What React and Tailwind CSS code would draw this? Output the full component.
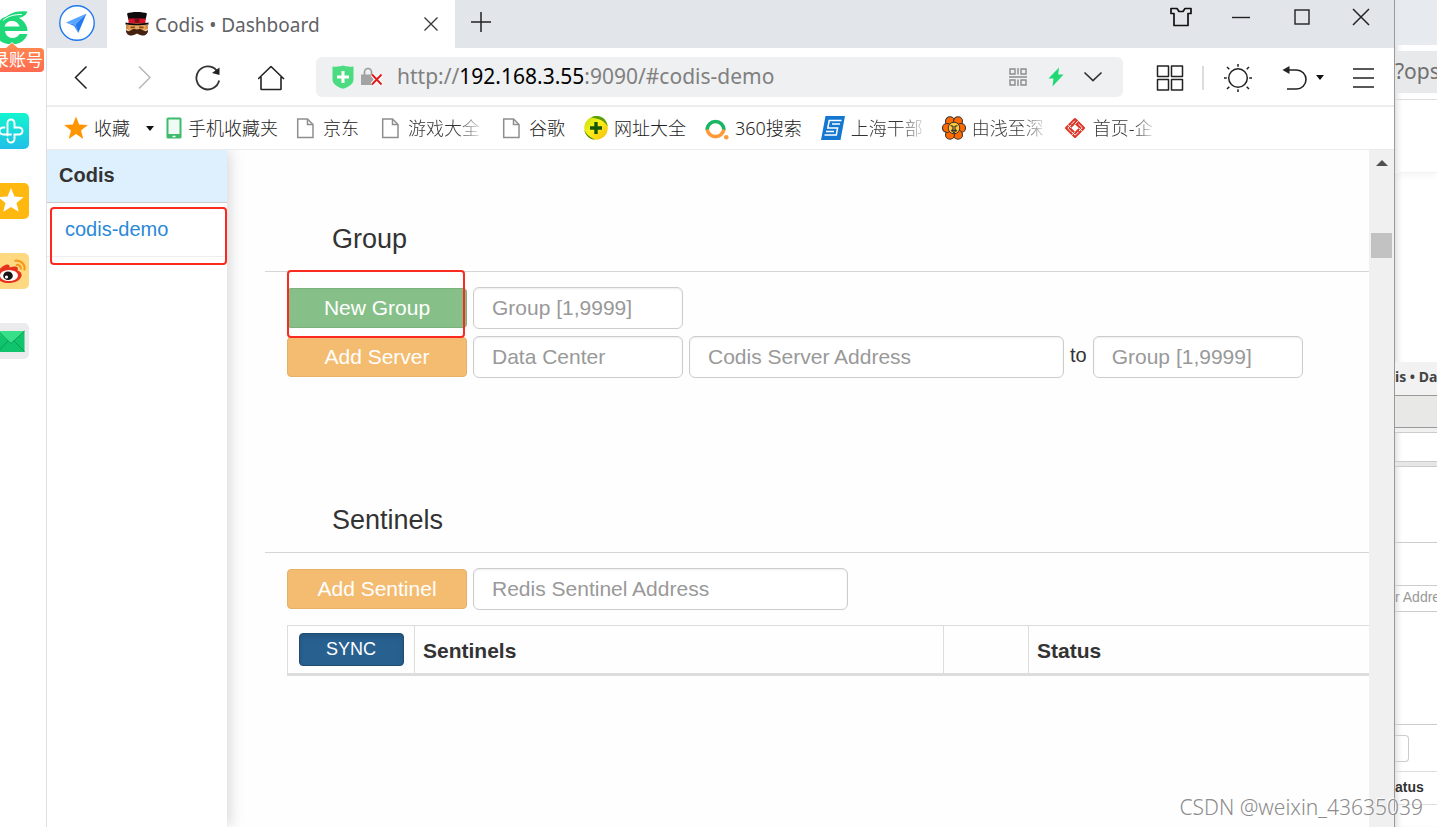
import React from 'react';

const UI = "font-['Noto_Sans','Noto_Sans_CJK_SC',sans-serif]";
const ARIAL = "font-['Liberation_Sans',Arial,sans-serif]";

/* ---------- bookmark icons ---------- */

function StarIcon() {
  return (
    <svg viewBox="0 0 24 24" className="h-6 w-6">
      <path d="M12 0.500l3.100 8.100 8.700.4-6.800 5.400 2.300 8.500-7.300-4.800-7.300 4.800L7 14.400.2 9l8.700-.4z" fill="#ff9500" />
    </svg>
  );
}

function PhoneIcon() {
  return (
    <svg viewBox="0 0 16 22" className="h-[22px] w-4">
      <rect x="0.500" y="0.500" width="15" height="21" rx="1.500" fill="#3dba6b" />
      <rect x="2.500" y="2.500" width="11" height="14.500" fill="#f1fbf5" />
      <path d="M6.500 19.500h3" stroke="#fff" strokeWidth="1.500" />
    </svg>
  );
}

function FileIcon() {
  return (
    <svg viewBox="0 0 24 24" className="h-6 w-6" fill="none" stroke="#8e8e8e" strokeWidth="1.500">
      <path d="M4.700 3h9.800l5.500 5.500v13h-15.300z" />
      <path d="M14.500 3v5.500h5.500" />
    </svg>
  );
}

function Ball360Icon() {
  return (
    <svg viewBox="0 0 24 24" className="h-6 w-6">
      <defs>
        <linearGradient id="ball" x1="0" y1="0" x2="1" y2="1">
          <stop offset="0" stopColor="#b5e010" />
          <stop offset="0.450" stopColor="#fff01a" />
          <stop offset="1" stopColor="#f2b90a" />
        </linearGradient>
      </defs>
      <circle cx="12" cy="12" r="11.800" fill="url(#ball)" />
      <path d="M7 1.500C12-1.500 19-.5 22.500 6c.7 1.500 1 3 1.200 4.500C21 5.500 16 2.500 7 1.500z" fill="#5a9e0c" />
      <path d="M.3 14c1 5 5.200 9.700 11.200 9.800C8 22.500 3 19.500.3 14z" fill="#3f8a12" />
      <path d="M10.300 6h3.400v4.300H18v3.400h-4.300V18h-3.400v-4.300H6v-3.400h4.300z" fill="#17560a" />
    </svg>
  );
}

function SearchRingIcon() {
  return (
    <svg viewBox="0 0 24 24" className="h-6 w-6" fill="none" strokeWidth="3.600">
      <path d="M2 14a8.500 8.500 0 1 1 17 0" stroke="#19b565" />
      <path d="M2.200 13.500a8.400 8.400 0 0 0 16.600 0" stroke="#ff9a38" />
      <circle cx="21.300" cy="21.300" r="2.300" fill="#ff9a38" />
    </svg>
  );
}

function ShanghaiIcon() {
  return (
    <svg viewBox="0 0 24 24" className="h-6 w-6">
      <path d="M4.500 0H24l-4.500 24H0z" fill="#1578d0" />
      <path d="M20.500 4.500H8.200L6.800 12h9.800l-1.300 7H3.500" fill="none" stroke="#fff" strokeWidth="1.500" />
      <path d="M19 8h-8M13 15.500H5" stroke="#fff" strokeWidth="1.300" />
    </svg>
  );
}

function LionIcon() {
  return (
    <svg viewBox="0 0 24 24" className="h-6 w-6">
      <g fill="#ff6a00" stroke="#3b3430" strokeWidth="1.100">
        <circle cx="8" cy="5.200" r="4.500" />
        <circle cx="16" cy="5.200" r="4.500" />
        <circle cx="19" cy="12" r="4.500" />
        <circle cx="16" cy="18.800" r="4.500" />
        <circle cx="8" cy="18.800" r="4.500" />
        <circle cx="5" cy="12" r="4.500" />
      </g>
      <circle cx="12" cy="12" r="5.800" fill="#ffc93a" stroke="#3b3430" />
      <path d="M8.500 9.500l2.500 1v3l-2 1.500M15.500 9.500l-2.500 1v3l2 1.500M10.300 14.500h3.400L12 17z" fill="none" stroke="#3b3430" strokeWidth="1.200" />
    </svg>
  );
}

function RedDiamondIcon() {
  return (
    <svg viewBox="-12 -12 24 24" className="h-6 w-6">
      <g transform="rotate(45)">
        <rect x="-7.500" y="-7.500" width="15" height="15" rx="1.500" fill="#dc3528" />
        <rect x="-2.700" y="-2.700" width="5.400" height="5.400" fill="#fff" />
        <path
          d="M-2.700-2.700V-8M2.700-2.700H8M2.700 2.700V8M-2.700 2.700H-8M-.3-5.200H5V-.5M5.200.3V5H.5M.3 5.200H-5V.5M-5.200-.3V-5"
          fill="none"
          stroke="#fff"
          strokeWidth="0.900"
        />
      </g>
    </svg>
  );
}

const bookmarks = [
  { text: '京东', Icon: FileIcon },
  { text: '游戏大全', Icon: FileIcon, fade: true },
  { text: '谷歌', Icon: FileIcon },
  { text: '网址大全', Icon: Ball360Icon },
  { text: '360搜索', Icon: SearchRingIcon },
  { text: '上海干部', Icon: ShanghaiIcon, fade: true },
  { text: '由浅至深', Icon: LionIcon, fade: true },
  { text: '首页-企', Icon: RedDiamondIcon, fade: true },
];

function Bookmark({ text, Icon, fade }) {
  return (
    <a href="#" className="flex items-center gap-1.5 whitespace-nowrap">
      <Icon />
      <span
        className={
          fade
            ? 'bg-linear-to-r from-[#333] from-70% to-[#333]/20 bg-clip-text text-transparent'
            : ''
        }
      >
        {text}
      </span>
    </a>
  );
}

/* ---------- browser chrome ---------- */

function TitleBar() {
  return (
    <header className="flex h-12 items-stretch bg-[#e2e5ea]">
      <button aria-label="Home page" className="flex w-[60px] items-center justify-center pb-0.5">
        <svg viewBox="0 0 36 36" className="h-9 w-9">
          <circle cx="18" cy="18" r="17.200" fill="#fff" stroke="#1f7af0" strokeWidth="1.400" />
          <path d="M27.500 8.500L7 17.500l9.300 2z" fill="#5aa5ff" />
          <path d="M27.500 8.500L16.300 19.500l3 8.500z" fill="#2379ee" />
          <path d="M16.300 19.500L7 17.500l8 3.500 4.300 7z" fill="#3a8cf5" />
        </svg>
      </button>
      <div className="flex w-[348px] items-center gap-1.5 bg-white pl-[18px] pr-3.5">
        <svg viewBox="0 0 24 26" className="h-[26px] w-6 shrink-0">
          <path d="M3 12h18v7l-3 4H6l-3-4z" fill="#e6a55c" />
          <path d="M1 14h2.500v4.500H1zM20.500 14H23v4.500h-2.500z" fill="#d18c4b" />
          <path d="M2 2.500C6 .5 18 .5 22 2.500L20.500 9h-17z" fill="#0d0b0b" />
          <path d="M3.500 7.500h17v5h-17z" fill="#d3142b" />
          <circle cx="12" cy="9.500" r="2.500" fill="#7c0b18" />
          <path d="M.5 11.500c7 1.500 16 1.500 23 0v2c-7 1-16 1-23 0z" fill="#0d0b0b" />
          <path d="M5.500 15.500H10v1.800H5.500zM14 15.500h4.500v1.800H14z" fill="#8a4a1c" />
          <path d="M12 18.500c2-1 5-.5 6.500 1 1.500 1.200 3 .5 4.500-.5.3 3-2 6-6 5.500-2.500-.3-4-1.200-5-2.200-1 1-2.500 1.900-5 2.200-4 .5-6.300-2.500-6-5.500 1.500 1 3 1.700 4.500.5 1.500-1.500 4.500-2 6.500-1z" fill="#43200f" />
        </svg>
        <span className="flex-1 pt-0.5 text-[19px] text-[#5f6266]">Codis • Dashboard</span>
        <button aria-label="Close tab">
          <svg viewBox="0 0 20 20" className="h-5 w-5" stroke="#3c3c3c" strokeWidth="1.400">
            <path d="M3.500 3.500l13 13M16.500 3.500l-13 13" />
          </svg>
        </button>
      </div>
      <button aria-label="New tab" className="flex w-[52px] items-center justify-center pb-1">
        <svg viewBox="0 0 20 20" className="h-5 w-5" stroke="#222" strokeWidth="1.500">
          <path d="M10 0v20M0 10h20" />
        </svg>
      </button>
      <div className="ml-auto flex items-center gap-[38px] pb-3.5 pr-[22px]">
        <button aria-label="Skin">
          <svg viewBox="0 0 22 22" className="h-[22px] w-[22px]" fill="none" stroke="#111" strokeWidth="1.700" strokeLinejoin="round">
            <path d="M1 2.500h6L9 5.500h4l2-3h6v5h-3V19.500H4V7.500H1z" />
          </svg>
        </button>
        <button aria-label="Minimize">
          <svg viewBox="0 0 22 22" className="h-[22px] w-[22px]" stroke="#222" strokeWidth="1.400">
            <path d="M2 11.500h18" />
          </svg>
        </button>
        <button aria-label="Maximize">
          <svg viewBox="0 0 22 22" className="h-[22px] w-[22px]" fill="none" stroke="#222" strokeWidth="1.400">
            <rect x="5" y="4" width="14" height="14" />
          </svg>
        </button>
        <button aria-label="Close">
          <svg viewBox="0 0 22 22" className="h-[22px] w-[22px]" stroke="#222" strokeWidth="1.500">
            <path d="M3 3l16 16M19 3L3 19" />
          </svg>
        </button>
      </div>
    </header>
  );
}

function Toolbar() {
  return (
    <div className="flex h-[59px] items-center border-b-2 border-[#ececec] bg-white pl-[22px] pr-4">
      <div className="flex items-center gap-[35px] pt-0.5">
        <button aria-label="Back">
          <svg viewBox="0 0 28 28" className="h-7 w-7" fill="none" stroke="#222" strokeWidth="1.500">
            <path d="M17.500 2.500L6.500 13.500l11 11" />
          </svg>
        </button>
        <button aria-label="Forward">
          <svg viewBox="0 0 28 28" className="h-7 w-7" fill="none" stroke="#b8b8b8" strokeWidth="1.500">
            <path d="M7 2.500l11 11-11 11" />
          </svg>
        </button>
        <button aria-label="Reload">
          <svg viewBox="0 0 28 28" className="h-7 w-7" fill="none" stroke="#333" strokeWidth="1.800">
            <path d="M24.100 16.500A11.500 11.500 0 1 1 21.500 6.300" />
            <path d="M24.500 3.500v7.500l-7.500-2z" fill="#222" stroke="none" />
          </svg>
        </button>
        <button aria-label="Home">
          <svg viewBox="0 0 28 28" className="h-7 w-7" fill="none" stroke="#222" strokeWidth="1.600" strokeLinejoin="round">
            <path d="M0 15L13 2.500 26 15M3 13v12q0 .5.500.5h19q.5 0 .5-.5V13" />
          </svg>
        </button>
      </div>

      <div className="ml-[30px] flex h-10 flex-1 items-center rounded-md bg-[#eff0f2] pl-4 pr-5">
        <svg viewBox="0 0 22 24" className="h-6 w-[22px]">
          <path d="M.5 1.500C5 2 8 1.500 11 .5c3 1 6 1.500 10.500 1v13c0 5-6 8-10.500 9.200C6.500 22.500.5 19.500.5 14.500z" fill="#4bdc82" />
          <path d="M9.500 6h3v4.500H17v3h-4.500V18h-3v-4.500H5v-3h4.500z" fill="#fff" />
        </svg>
        <svg viewBox="0 0 24 20" className="ml-1.5 h-5 w-6">
          <path d="M4.500 9V5a3.500 3.500 0 0 1 7 0V9" fill="none" stroke="#999" strokeWidth="1.600" />
          <path d="M1 7.500h12.500v10.500H1z" fill="#a3a3a3" />
          <path d="M12 7.500l9.500 10M21.500 7.500l-9.500 10" stroke="#fff" strokeWidth="4" />
          <path d="M12 7.500l9.500 10M21.500 7.500l-9.500 10" stroke="#e01b1b" strokeWidth="1.900" />
        </svg>
        <span className="ml-[13px] text-[21px] text-[#808080]">
          http://<span className="text-black">192.168.3.55</span>:9090/#codis-demo
        </span>
        <div className="ml-auto flex items-center gap-[19px]">
          <svg viewBox="0 0 18 18" className="h-[18px] w-[18px]" fill="none" stroke="#8c8c8c" strokeWidth="1.400">
            <path d="M1 1h5v5H1zM12 1h5v5h-5zM1 12h5v5H1zM12 12h5v5h-5zM0 9h18M9 0v6.500M9 11.500V18" />
          </svg>
          <svg viewBox="0 0 18 20" className="h-5 w-[18px]">
            <path d="M13 .5L2.500 11.500h5L6.500 19.500 17.500 7.500h-5.300z" fill="#1ed974" />
          </svg>
          <button aria-label="Show history">
            <svg viewBox="0 0 20 20" className="h-5 w-5" fill="none" stroke="#333" strokeWidth="1.700">
              <path d="M1.500 5.500l8.500 8 8.500-8" />
            </svg>
          </button>
        </div>
      </div>

      <div className="ml-[33px] flex items-center pt-0.5">
        <button aria-label="Apps">
          <svg viewBox="0 0 28 28" className="h-7 w-7" fill="none" stroke="#222" strokeWidth="1.500" strokeLinejoin="round">
            <path d="M1.500 2h11v10.500h-11zM15.500 2h11v10.500h-11zM1.500 15.500h11V26h-11zM15.500 15.500h11V26h-11z" />
          </svg>
        </button>
        <div className="ml-[18px] h-6 w-0.5 bg-[#dcdcdc]" />
        <button aria-label="Brightness" className="ml-5">
          <svg viewBox="0 0 28 28" className="h-7 w-7" fill="none" stroke="#222" strokeWidth="1.500">
            <circle cx="14" cy="14" r="9.300" />
            <path d="M14 0v2.800M14 25.200V28M0 14h2.800M25.200 14H28M3 3l2.300 2.300M22.700 22.700L25 25M25 3l-2.300 2.300M5.300 22.700L3 25" />
          </svg>
        </button>
        <button aria-label="Undo" className="ml-[30px] flex items-center gap-2">
          <svg viewBox="0 0 26 28" className="h-7 w-[26px]" fill="none" stroke="#222" strokeWidth="1.600">
            <path d="M6 6h8.500a9.500 9.500 0 0 1 0 19H5" />
            <path d="M.5 6l7-4v8z" fill="#222" stroke="none" />
          </svg>
          <svg viewBox="0 0 8 5" className="h-[5px] w-2">
            <path d="M0 0h8L4 5z" fill="#111" />
          </svg>
        </button>
        <button aria-label="Menu" className="ml-[26px]">
          <svg viewBox="0 0 28 28" className="h-7 w-7" stroke="#222" strokeWidth="1.600">
            <path d="M3 5h21M3 14h21M3 23h21" />
          </svg>
        </button>
      </div>
    </div>
  );
}

function BookmarkBar() {
  return (
    <nav className="flex h-[43px] items-center gap-[15px] overflow-hidden border-b border-[#ececec] bg-white pl-[17px] text-[18px] font-light text-[#222]">
      <div className="flex items-center gap-3">
        <button className="flex items-center gap-1.5 whitespace-nowrap">
          <StarIcon />
          <span>收藏</span>
          <svg viewBox="0 0 8 5" className="ml-2.5 h-[5px] w-2">
            <path d="M0 0h8L4 5z" fill="#111" />
          </svg>
        </button>
        <a href="#" className="flex items-center gap-1.5 whitespace-nowrap">
          <PhoneIcon />
          <span>手机收藏夹</span>
        </a>
      </div>
      <div className="flex items-center gap-[19px]">
        {bookmarks.map((b) => (
          <Bookmark key={b.text} {...b} />
        ))}
      </div>
    </nav>
  );
}

/* ---------- Codis page ---------- */

function Field({ label, width }) {
  return (
    <input
      type="text"
      aria-label={label}
      placeholder={label}
      className={`${width} h-[42px] rounded-md border border-[#ccc] bg-white pl-[18px] pr-2 text-[21px] text-[#555] shadow-[inset_0_1px_2px_rgba(0,0,0,0.08)] placeholder:text-[#999]`}
    />
  );
}

function ActionButton({ children, tone }) {
  return (
    <button className={`${tone} h-10 w-[180px] rounded border text-[21px] text-white`}>{children}</button>
  );
}

const GREEN = 'bg-[#86c088] border-[#7cb07d]';
const ORANGE = 'bg-[#f4bc70] border-[#e6b067]';

function SectionTitle({ children }) {
  return (
    <h2 className="flex h-[68px] items-center border-b border-[#d5d5d5] pl-[67px] pt-[3px] text-[27px] text-[#333]">
      {children}
    </h2>
  );
}

function Sidebar() {
  return (
    <aside className="z-10 w-[180px] shrink-0 bg-white shadow-[3px_0_14px_rgba(0,0,0,0.15)]">
      <h1 className="flex h-[53px] items-center border-b border-[#ccc] bg-[#def0fe] px-3 pb-0.5 text-[20px] font-bold text-[#333]">
        Codis
      </h1>
      <div className="relative">
        <a href="#codis-demo" className="flex h-[54px] items-center border-b border-[#eee] px-[18px] pb-0.5 text-[20px] text-[#2a88d8]">
          codis-demo
        </a>
        <div className="pointer-events-none absolute -bottom-2 left-[3px] right-0 top-1 rounded border-2 border-[#fb2a20]" />
      </div>
    </aside>
  );
}

function CodisPage() {
  return (
    <main className={`${ARIAL} flex min-w-0 flex-1 overflow-hidden bg-[#fefefe]`}>
      <Sidebar />
      <div className="min-w-0 flex-1 overflow-hidden pl-[38px] pt-[54px]">
        <section>
          <SectionTitle>Group</SectionTitle>
          <div className="flex flex-col gap-[7px] pl-[22px] pt-[15px]">
            <div className="flex items-center gap-1.5">
              <div className="relative">
                <ActionButton tone={GREEN}>New Group</ActionButton>
                <div className="pointer-events-none absolute -bottom-2.5 -top-[18px] left-0 right-0.5 rounded border-2 border-[#fb2a20]" />
              </div>
              <Field label="Group [1,9999]" width="w-[210px]" />
            </div>
            <div className="flex items-center gap-1.5">
              <ActionButton tone={ORANGE}>Add Server</ActionButton>
              <Field label="Data Center" width="w-[210px]" />
              <Field label="Codis Server Address" width="w-[375px]" />
              <span className="pb-1 text-[20px] text-[#333]">to</span>
              <Field label="Group [1,9999]" width="w-[210px]" />
            </div>
          </div>
        </section>

        <section className="pt-[107px]">
          <SectionTitle>Sentinels</SectionTitle>
          <div className="pl-[22px] pt-[15px]">
            <div className="flex items-center gap-1.5">
              <ActionButton tone={ORANGE}>Add Sentinel</ActionButton>
              <Field label="Redis Sentinel Address" width="w-[375px]" />
            </div>
            <table className="mt-[15px] w-full table-fixed border-collapse text-left text-[21px] text-[#333]">
              <colgroup>
                <col className="w-[127px]" />
                <col className="w-[529px]" />
                <col className="w-[85px]" />
                <col />
              </colgroup>
              <thead>
                <tr className="h-[49px] border-b-3 border-t border-b-[#ddd] border-t-[#ddd]">
                  <th className="border-x border-x-[#ddd] text-center align-top font-normal">
                    <button className="mt-[7px] block h-[33px] w-[105px] rounded border border-[#204d74] bg-[#286090] text-[18px] text-white shadow-[inset_0_3px_5px_rgba(0,0,0,0.125)] mx-auto">
                      SYNC
                    </button>
                  </th>
                  <th className="border-r border-r-[#ddd] px-2 pt-[3px]">Sentinels</th>
                  <th className="border-r border-r-[#ddd]" aria-label="Actions" />
                  <th className="px-2 pt-[3px]">Status</th>
                </tr>
              </thead>
            </table>
          </div>
        </section>
      </div>
      <div className="flex w-[25px] shrink-0 flex-col items-center bg-[#f0f0f0]">
        <svg viewBox="0 0 12 6" className="mt-2.5 h-1.5 w-3">
          <path d="M0 6h12L6 0z" fill="#505050" />
        </svg>
        <div className="mt-[67px] h-[25px] w-[21px] bg-[#c2c2c2]" />
      </div>
    </main>
  );
}

/* ---------- desktop around the window ---------- */

function LeftDock() {
  return (
    <aside className={`${UI} w-[47px] shrink-0 overflow-hidden border-r border-[#dcdfe3] bg-white pt-2.5`}>
      <svg viewBox="0 0 29 38" className="h-[38px] w-[29px]">
        <path d="M-4 19C-3 10 4 6 11 6c2 0 4 .3 6 1 6 2 10.500 8 10.500 14H5c.5 4 3.500 7 7.500 7 3 0 5.500-1.500 7-4h8C25.500 30.500 19 34.500 12 34.500S-3 31-4 24z" fill="#1fd879" />
        <path d="M4.500 16.500c1-3.500 4-5.500 7.500-5.500s6.500 2 7.500 5.500z" fill="#fff" />
        <path d="M2 11C8 3 17 0 27.500 1.500 26 6.500 20 8.500 14 8 9 7.500 5 8.500 2 11z" fill="#1fd879" />
        <path d="M22 4.500C14 4.500 8 6 3 10.500" fill="none" stroke="#fff" strokeWidth="1" />
        <path d="M5 38.500l7-6 7 6z" fill="#ff8a50" stroke="#fff" strokeWidth="0.800" />
      </svg>
      <div className="flex h-6 w-11 items-center justify-end rounded-r-sm bg-linear-to-b from-[#ff8650] to-[#ff6a50] pr-px text-[17px] text-white">
        <span className="shrink-0">录账号</span>
      </div>
      <div className="mt-[41px] flex flex-col gap-[34px]">
        <svg viewBox="0 0 29 36" className="h-9 w-[29px]">
          <defs>
            <linearGradient id="teal" x1="0" y1="0" x2="0" y2="1">
              <stop offset="0" stopColor="#14f5cf" />
              <stop offset="1" stopColor="#20bfe8" />
            </linearGradient>
          </defs>
          <rect x="-10" width="39" height="36" rx="5" fill="url(#teal)" />
          <path
            d="M7.500 22.500V10a3.500 3.500 0 0 1 7 0v4.500H19a3.500 3.500 0 0 1 0 7h-4.500V26a3.500 3.500 0 0 1-7 0M11 21.500H3a3.500 3.500 0 0 1 0-7h1.500"
            fill="none"
            stroke="#fff"
            strokeWidth="1.900"
            strokeLinecap="round"
          />
        </svg>
        <svg viewBox="0 0 29 36" className="h-9 w-[29px]">
          <rect x="-10" width="39" height="36" rx="5" fill="#ffb80f" />
          <path d="M11 5l3.500 8.500 9 .7-7 5.800 2.200 8.800-7.700-4.800-7.700 4.800L5.500 20l-7-5.800 9-.7z" fill="#fff" />
        </svg>
        <svg viewBox="0 0 29 36" className="h-9 w-[29px]">
          <rect x="-10" width="39" height="36" rx="5" fill="#ffd882" />
          <path d="M-2 19c2-5 9-9 11-7 1 1 .5 2.500.5 2.500s6-2.500 8 0c.8 1 0 3 0 3 3 .8 4.500 3 4 5.500-1 4.500-7 7-13 7-5 0-9-1.500-10.500-5z" fill="#e6321d" />
          <ellipse cx="9" cy="22.500" rx="9" ry="5.500" fill="#fff" />
          <ellipse cx="8" cy="22.800" rx="4.800" ry="4.300" fill="#151515" />
          <circle cx="6.500" cy="24" r="1.600" fill="#fff" />
          <path d="M16 12c3-.8 5.500 1.500 4.800 4.600M14.500 8c6-1.600 11.500 3.500 9.800 9.500" fill="none" stroke="#f59b1c" strokeWidth="2.200" />
        </svg>
        <svg viewBox="0 0 29 36" className="h-9 w-[29px]">
          <rect x="-10" width="39" height="36" rx="5" fill="#ebebed" />
          <rect x="-4" y="8" width="28.500" height="21" fill="#10c46e" />
          <path d="M-4 8h28.500L11 20.500z" fill="#36df88" />
          <path d="M24.500 8L11 20.500-2 8M24.500 28.500L14 18M-2 28.500L8 18" fill="none" stroke="#0b9d57" strokeWidth="1" />
        </svg>
      </div>
    </aside>
  );
}

function BackgroundWindow() {
  return (
    <aside className="flex w-[42px] shrink-0 flex-col overflow-hidden whitespace-nowrap bg-white shadow-[inset_6px_0_6px_-4px_rgba(0,0,0,0.15)]">
      <div className="h-[45px] bg-[#e4e8ec]/90" />
      <div className={`${UI} mt-1.5 flex h-[42px] items-center bg-[#e6e7e9]/90 text-[21px] text-[#707070]`}>?ops</div>
      <div className="mt-1.5 h-[74px] border-b border-t border-b-[#f2f2f2] border-t-[#ddd] shadow-[0_4px_6px_rgba(0,0,0,0.03)]" />
      <div className={`${UI} mt-[189px] flex h-[33px] items-center bg-[#f2f2f2] pb-1 text-[14px] font-bold text-[#444]`}>is • Da</div>
      <div className="h-[33px] border-y border-[#999] bg-[#e8e8e6]" />
      <div className="h-1 bg-[#f0f0f0]" />
      <div className="h-[30px] border-y border-[#ccc]" />
      <div className="h-[5px] border-b border-[#ccc] bg-[#e6e6e6]" />
      <div className="mt-[75px] border-t border-[#ccc]" />
      <div className={`${ARIAL} mt-[42px] flex h-[27px] items-center border-y border-[#ccc] pb-0.5 text-[14px] text-[#999]`}>r Addre</div>
      <div className="mt-28 border-t border-[#ccc]" />
      <div className="mt-2.5 h-[27px] w-3.5 rounded-r border border-l-0 border-[#ccc]" />
      <div className={`${ARIAL} mt-[9px] flex h-[34px] items-center border-y border-[#ddd] pb-0.5 text-[14px] font-bold text-[#333]`}>atus</div>
    </aside>
  );
}

export default function App() {
  return (
    <div className="relative flex min-h-screen overflow-hidden bg-white">
      <LeftDock />
      <div className={`${UI} flex min-w-0 flex-1 flex-col border-r border-[#9a9a9a]`}>
        <TitleBar />
        <Toolbar />
        <BookmarkBar />
        <CodisPage />
      </div>
      <BackgroundWindow />
      <p className={`${UI} pointer-events-none absolute bottom-1 right-3.5 text-[21px] font-light text-[#8c8c8c] [text-shadow:-1px_-1px_0_#fff]`}>
        CSDN @weixin_43635039
      </p>
    </div>
  );
}
